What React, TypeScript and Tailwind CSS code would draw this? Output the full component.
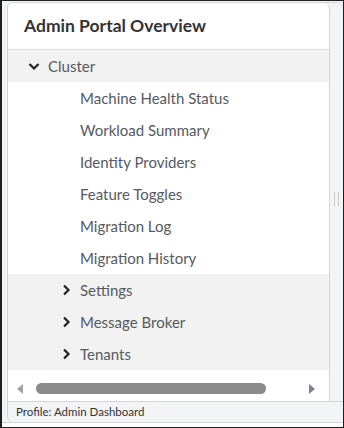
import React from 'react';

const clusterChildren = [
  'Machine Health Status',
  'Workload Summary',
  'Identity Providers',
  'Feature Toggles',
  'Migration Log',
  'Migration History',
];

const collapsed = ['Settings', 'Message Broker', 'Tenants'];

function ChevronDown() {
  return (
    <svg width="12" height="12" viewBox="0 0 12 12" className="shrink-0">
      <path d="M1.5 4 L6 8.5 L10.5 4" fill="none" stroke="#222" strokeWidth="2.2" />
    </svg>
  );
}

function ChevronRight() {
  return (
    <svg width="12" height="12" viewBox="0 0 12 12" className="shrink-0">
      <path d="M4 1.5 L8.5 6 L4 10.5" fill="none" stroke="#222" strokeWidth="2.2" />
    </svg>
  );
}

export default function App() {
  return (
    <div
      className="w-[344px] h-[428px] overflow-hidden border-l-2 border-r border-y border-[#1f1f1f] bg-[#f3f4f6] flex flex-col"
      style={{ fontFamily: 'Lato, "Liberation Sans", sans-serif' }}
    >
      <div className="flex-1 flex flex-col pl-[5px] pt-px min-h-0">
        <div className="h-[420px] flex flex-col rounded-md border-l border-t border-[#d4d4d8] bg-[#f3f4f6] overflow-hidden">
          <div className="flex flex-1 min-h-0">
            {/* Main panel */}
            <div className="flex-1 flex flex-col bg-white border-r border-[#d4d4d8] rounded-tr-md">
              <div className="h-[47px] flex items-center px-4 border-b border-[#e0e0e0]">
                <h1 className="text-[17.5px] font-bold text-[#333]">Admin Portal Overview</h1>
              </div>

              <div className="flex flex-col text-[15px] text-[#555a61]">
                <div className="h-8 flex items-center gap-2 pl-5 bg-[#f2f2f2]">
                  <ChevronDown />
                  <span>Cluster</span>
                </div>
                {clusterChildren.map((item) => (
                  <div key={item} className="h-8 flex items-center pl-[72px] bg-white">
                    {item}
                  </div>
                ))}
                <div className="bg-[#f2f2f2]">
                  {collapsed.map((item) => (
                    <div key={item} className="h-8 flex items-center gap-2 pl-[52px]">
                      <ChevronRight />
                      <span>{item}</span>
                    </div>
                  ))}
                </div>
              </div>

              {/* Horizontal scrollbar */}
              <div className="mt-auto h-[24px] flex items-center pl-2 pr-3 pb-px">
                <svg width="10" height="12" viewBox="0 0 10 12">
                  <polygon points="7,1 7,11 1,6" fill="#a3a3a3" />
                </svg>
                <div className="ml-[10px] w-[230px] h-[11px] rounded-full bg-[#8a8a8a]" />
                <svg width="10" height="12" viewBox="0 0 10 12" className="ml-auto">
                  <polygon points="2,1 2,11 8,6" fill="#7a8290" />
                </svg>
              </div>
            </div>

            {/* Right gutter */}
            <div className="w-[13px] flex items-center justify-center">
              <div className="flex gap-[3px] mt-[-6px]">
                <div className="w-px h-[14px] bg-[#c8c8c8]" />
                <div className="w-px h-[14px] bg-[#c8c8c8]" />
              </div>
            </div>
          </div>

          <div className="h-[21px] shrink-0 flex items-center px-2 border-t border-[#d4d4d8] bg-[#f3f4f6] text-[11.5px] text-[#333] rounded-b-md">
            Profile: Admin Dashboard
          </div>
        </div>
      </div>
      <div className="h-[5px] border-t border-[#d4d4d8] bg-white" />
    </div>
  );
}
